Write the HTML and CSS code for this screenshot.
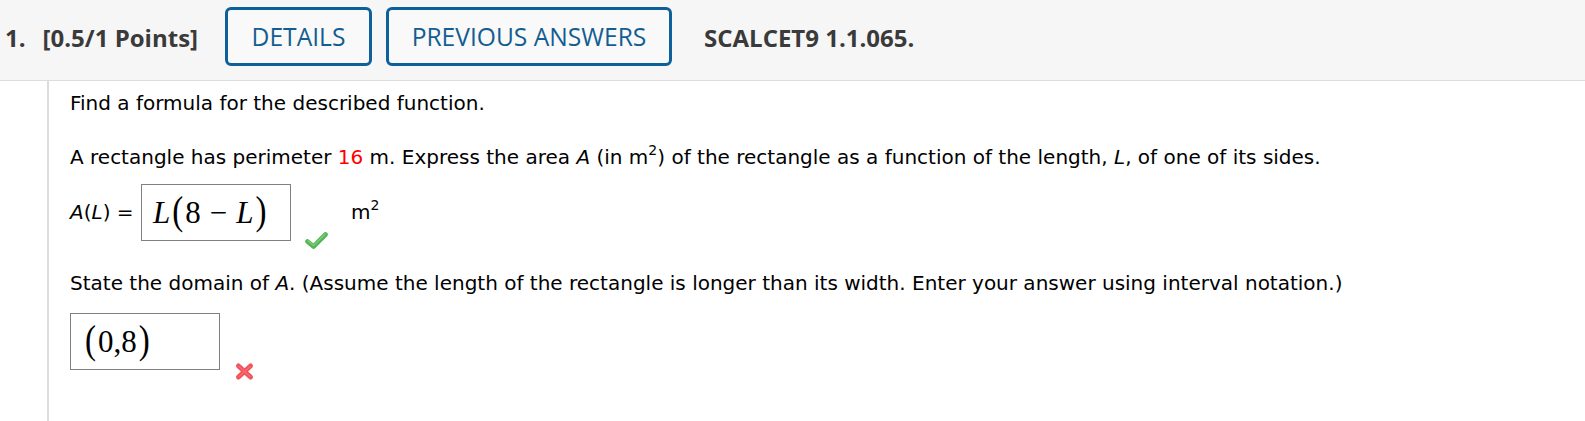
FILE: index.html
```html
<!DOCTYPE html>
<html>
<head>
<meta charset="utf-8">
<link rel="stylesheet" href="styles.css">
</head>
<body>
<div class="header">
  <div class="qnum"><span class="num">1.</span>[0.5/1 Points]</div>
  <button class="hbtn btn-details">DETAILS</button>
  <button class="hbtn btn-prev">PREVIOUS ANSWERS</button>
  <div class="qref">SCALCET9 1.1.065.</div>
</div>
<div class="body">
  <div class="content">
    <p class="line l1">Find a formula for the described function.</p>
    <p class="line l2">A rectangle has perimeter <span class="red">16</span> m. Express the area <i>A</i> (in m<sup>2</sup>) of the rectangle as a function of the length, <i>L</i>, of one of its sides.</p>
    <div class="answer-row row1">
      <span class="label"><i>A</i>(<i>L</i>) =</span>
      <div class="mbox box1"><span class="mi">L</span><span class="paren">(</span><span class="mn">8</span><span class="mo">−</span><span class="mi">L</span><span class="paren">)</span></div>
      <svg class="check" width="23" height="17" viewBox="0 0 23 17"><path d="M2.5 9.5 L8.5 14.5 L20.5 2.5" fill="none" stroke="#55b555" stroke-width="4.6" stroke-linecap="round" stroke-linejoin="round"/><path d="M3 9 L8.5 13.5 L20 2.2" fill="none" stroke="#8fd98f" stroke-width="1.4" stroke-linecap="round" stroke-linejoin="round" opacity="0.7"/></svg>
      <span class="unit">m<sup>2</sup></span>
    </div>
    <p class="line l3">State the domain of <i>A</i>. (Assume the length of the rectangle is longer than its width. Enter your answer using interval notation.)</p>
    <div class="answer-row row2">
      <div class="mbox box2"><span class="paren">(</span><span class="mn">0,8</span><span class="paren">)</span></div>
      <svg class="cross" width="21" height="19" viewBox="0 0 21 19"><path d="M4.5 4 L16.5 15 M16.5 4 L4.5 15" stroke="#f2545c" stroke-width="5" stroke-linecap="round"/><path d="M5 4.5 L16 14.5 M16 4.5 L5 14.5" stroke="#ff7a80" stroke-width="1.2" stroke-linecap="round" opacity="0.6"/></svg>
    </div>
  </div>
</div>
</body>
</html>
```
FILE: styles.css
```css
html, body {
  margin: 0;
  padding: 0;
  background: #ffffff;
}
body {
  width: 1585px;
  height: 421px;
  overflow: hidden;
  font-family: "DejaVu Sans", Verdana, sans-serif;
  color: #000;
}
.header {
  height: 80px;
  background: #f6f6f6;
  border-bottom: 1px solid #dddddd;
  display: flex;
  align-items: center;
}
.qnum {
  font-family: "Open Sans", sans-serif;
  font-weight: 700;
  font-size: 24px;
  color: #3a3a3a;
  margin-left: 5px;
  width: 220px;
  margin-top: -5px;
  white-space: nowrap;
}
.num { margin-right: 17px; }
.hbtn {
  font-family: "Open Sans", sans-serif;
  font-size: 24.6px;
  font-weight: 500;
  color: #135d93;
  background: #f9f9f9;
  border: 3px solid #0d6099;
  border-radius: 6px;
  height: 59px;
  margin-top: -7px;
  padding: 0;
  text-align: center;
}
.btn-details { width: 147px; }
.btn-prev { width: 286px; margin-left: 14px; }
.qref {
  font-family: "Open Sans", sans-serif;
  font-weight: 700;
  font-size: 24px;
  color: #3a3a3a;
  margin-left: 32px;
  margin-top: -5px;
}
.body {
  border-left: 2px solid #dcdcdc;
  margin-left: 47px;
  height: 340px;
}
.content {
  padding-left: 21px;
  padding-top: 10px;
  font-size: 20px;
}
.line {
  margin: 0;
  line-height: 24px;
}
.l2 { margin-top: 30px; }
.l3 { margin-top: 23px; }
.red { color: #ff0000; }
sup { font-size: 14px; vertical-align: 9px; line-height: 0; }
.answer-row {
  display: flex;
  align-items: flex-start;
}
.row1 { margin-top: 15px; height: 64px; }
.label { margin-top: 16px; width: 71px; line-height: 24px; }
.mbox {
  border: 1px solid #808080;
  background: #fff;
  box-sizing: border-box;
  height: 57px;
  font-family: "Liberation Serif", serif;
  font-size: 31px;
  display: flex;
  align-items: center;
  color: #000;
}
.box1 { width: 150px; padding-left: 11px; }
.box2 { width: 150px; margin-top: 18px; padding-left: 12px; }
.mi { font-style: italic; }
.paren {
  font-size: 33px;
  margin: 0 2px;
  display: inline-block;
  transform: scaleY(1.22);
  position: relative;
  top: -1px;
}
.mo { margin: 0 9px; }
.check { margin-left: 14px; margin-top: 48px; }
.unit { margin-left: 23px; margin-top: 16px; line-height: 24px; }
.cross { margin-left: 14px; margin-top: 67px; }
```
